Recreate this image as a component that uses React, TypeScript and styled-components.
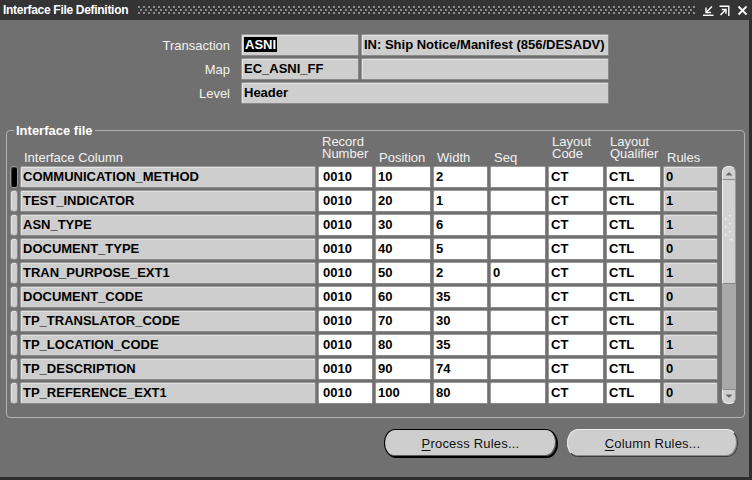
import React from 'react';
import styled, { createGlobalStyle } from 'styled-components';

const Global = createGlobalStyle`
  html, body { margin: 0; padding: 0; background: #707070; }
  body { font-family: "Liberation Sans", Arial, sans-serif; }
  * { box-sizing: border-box; }
`;

const Window = styled.div`
  width: 752px;
  height: 480px;
  display: flex;
  flex-direction: column;
  background: #707070;
  overflow: hidden;
`;

const TitleBar = styled.div`
  height: 20px;
  flex: none;
  background: #343434;
  display: flex;
  align-items: center;
  padding-left: 3px;
`;

const Title = styled.div`
  color: #ffffff;
  font-weight: bold;
  font-size: 12px;
  letter-spacing: -0.3px;
  white-space: nowrap;
  width: 135px;
`;

const Dots = styled.div`
  width: 557px;
  height: 10px;
  background-image:
    radial-gradient(circle at 1px 1px, #8e8e8e 0.7px, transparent 1px),
    radial-gradient(circle at 1px 1px, #8e8e8e 0.7px, transparent 1px);
  background-size: 5px 6px, 5px 6px;
  background-position: 0 1px, 2px 4px;
`;

const Controls = styled.div`
  display: flex;
  align-items: center;
  margin-left: 8px;
  gap: 5px;
`;

const Body = styled.div`
  flex: 1;
  display: flex;
  flex-direction: column;
  padding: 14px 0 0 6px;
  border-right: 3px solid #2e2e2e;
  border-bottom: 3px solid #2e2e2e;
`;

const Form = styled.div`
  display: flex;
  flex-direction: column;
  gap: 2px;
`;

const FormRow = styled.div`
  display: flex;
  align-items: center;
  gap: 2px;
`;

const Label = styled.div`
  width: 224px;
  margin-right: 9px;
  text-align: right;
  color: #f2f2f2;
  font-size: 13px;
`;

const Field = styled.div<{ $w: number; $white?: boolean; $pad?: number }>`
  width: ${p => p.$w}px;
  height: 22px;
  flex: none;
  background: ${p => (p.$white ? '#ffffff' : '#cecece')};
  border: 1px solid #8a8a8a;
  border-top-color: #9a9a9a;
  border-left-color: #9a9a9a;
  border-radius: 2px;
  box-shadow: inset 1px 1px 0 ${p => (p.$white ? '#ffffff' : '#e2e2e2')};
  padding: 0 ${p => p.$pad ?? 2}px;
  font-size: 13px;
  font-weight: bold;
  line-height: 20px;
  color: #000;
  white-space: nowrap;
  overflow: hidden;
`;

const Selected = styled.span`
  background: #000;
  color: #fff;
  padding: 0 1px;
`;

const Group = styled.div`
  width: 739px;
  margin-top: 26px;
  border: 1px solid #b2b2b2;
  border-radius: 4px;
  padding: 0 8px 13px 3px;
  display: flex;
  flex-direction: column;
`;

const GroupTitle = styled.div`
  align-self: flex-start;
  margin: -8px 0 -4px 4px;
  padding: 0 2px;
  height: 15px;
  line-height: 15px;
  background: #707070;
  color: #ffffff;
  font-weight: bold;
  font-size: 13px;
`;

const cols = '8px 296px 55px 56px 55px 56px 56px 55px 55px';

const HeaderGrid = styled.div`
  display: grid;
  grid-template-columns: ${cols};
  column-gap: 2px;
  height: 31px;
  margin-bottom: 1px;
  align-items: end;
`;

const HeaderCell = styled.div<{ $two?: boolean }>`
  padding-left: 4px;
  padding-bottom: ${p => (p.$two ? 5 : 0)}px;
  line-height: ${p => (p.$two ? 12 : 15)}px;
  font-size: 13px;
  color: #f2f2f2;
  white-space: pre-line;
`;

const TableArea = styled.div`
  display: flex;
  gap: 4px;
`;

const Rows = styled.div`
  display: flex;
  flex-direction: column;
  gap: 2px;
`;

const Row = styled.div`
  display: grid;
  grid-template-columns: ${cols};
  column-gap: 2px;
`;

const Indicator = styled.div<{ $current?: boolean }>`
  height: 22px;
  border-radius: 3px;
  background: ${p => (p.$current ? '#000000' : '#cecece')};
  border: 1px solid ${p => (p.$current ? '#9a9a9a' : '#8a8a8a')};
  box-shadow: inset 1px 1px 0 ${p => (p.$current ? '#3a3a3a' : '#e6e6e6')};
`;

const Cell = styled(Field)`
  width: auto;
`;

const Scrollbar = styled.div`
  width: 14px;
  height: 238px;
  display: flex;
  flex-direction: column;
`;

const ArrowBtn = styled.div<{ $down?: boolean }>`
  height: ${p => (p.$down ? 15 : 14)}px;
  background: #d0d0d0;
  border: 1px solid #ececec;
  border-right-color: #9a9a9a;
  border-radius: ${p => (p.$down ? '0 0 6px 6px' : '6px 6px 0 0')};
  border-${p => (p.$down ? 'top' : 'bottom')}: 1px solid #8a8a8a;
  display: flex;
  align-items: center;
  justify-content: center;
`;

const Thumb = styled.div`
  height: 104px;
  background: #d2d2d2;
  border-left: 1px solid #ececec;
  border-right: 1px solid #9a9a9a;
  border-bottom: 1px solid #8a8a8a;
  display: flex;
  justify-content: center;
  padding-top: 35px;
`;

const Track = styled.div`
  flex: 1;
  background: #a9a9a9;
`;

const ButtonRow = styled.div`
  display: flex;
  justify-content: flex-end;
  gap: 10px;
  margin-top: 11px;
  padding-right: 11px;
`;

const Button = styled.button<{ $w: number; $default?: boolean }>`
  width: ${p => p.$w}px;
  height: 28px;
  border-radius: 11px / 14px;
  background: #cecece;
  font-family: "Liberation Sans", Arial, sans-serif;
  font-size: 13px;
  letter-spacing: 0.2px;
  color: #111;
  padding: 0;
  border: 1px solid ${p => (p.$default ? '#000' : '#ececec')};
  border-right-color: ${p => (p.$default ? '#000' : '#3a3a3a')};
  border-bottom-color: ${p => (p.$default ? '#000' : '#3a3a3a')};
  box-shadow: ${p => (p.$default ? '1px 1px 0 #000, inset -1px -1px 0 #5a5a5a' : 'inset -1px -1px 0 #8a8a8a')};
  u { text-decoration: underline; text-underline-offset: 2px; }
`;

const rows = [
  ['COMMUNICATION_METHOD', '0010', '10', '2', '', 'CT', 'CTL', '0'],
  ['TEST_INDICATOR', '0010', '20', '1', '', 'CT', 'CTL', '1'],
  ['ASN_TYPE', '0010', '30', '6', '', 'CT', 'CTL', '1'],
  ['DOCUMENT_TYPE', '0010', '40', '5', '', 'CT', 'CTL', '0'],
  ['TRAN_PURPOSE_EXT1', '0010', '50', '2', '0', 'CT', 'CTL', '1'],
  ['DOCUMENT_CODE', '0010', '60', '35', '', 'CT', 'CTL', '0'],
  ['TP_TRANSLATOR_CODE', '0010', '70', '30', '', 'CT', 'CTL', '1'],
  ['TP_LOCATION_CODE', '0010', '80', '35', '', 'CT', 'CTL', '1'],
  ['TP_DESCRIPTION', '0010', '90', '74', '', 'CT', 'CTL', '0'],
  ['TP_REFERENCE_EXT1', '0010', '100', '80', '', 'CT', 'CTL', '0'],
];

const headers: [string, boolean][] = [
  ['', false],
  ['Interface Column', false],
  ['Record\nNumber', true],
  ['Position', false],
  ['Width', false],
  ['Seq', false],
  ['Layout\nCode', true],
  ['Layout\nQualifier', true],
  ['Rules', false],
];

export default function App() {
  return (
    <>
      <Global />
      <Window>
        <TitleBar>
          <Title>Interface File Definition</Title>
          <Dots />
          <Controls>
            <svg width="11" height="12" viewBox="0 0 11 12">
              <g stroke="#fff" strokeWidth="1.4" fill="none">
                <path d="M0 11.3H10.5" />
                <path d="M3 3.5V8.5H8" />
                <path d="M3 8.5L9 2.5" />
              </g>
            </svg>
            <svg width="11" height="12" viewBox="0 0 11 12">
              <g stroke="#fff" strokeWidth="1.4" fill="none">
                <path d="M0.5 2.2H9.8V12" />
                <path d="M1.5 11L7 5.5" />
                <path d="M2.8 5.5H7V9.7" />
              </g>
            </svg>
            <svg width="12" height="12" viewBox="0 0 12 12" style={{ marginLeft: 2 }}>
              <g stroke="#fff" strokeWidth="1.8" fill="none">
                <path d="M1.5 2.5L9.5 10.5" />
                <path d="M9.5 2.5L1.5 10.5" />
              </g>
            </svg>
          </Controls>
        </TitleBar>
        <Body>
          <Form>
            <FormRow>
              <Label>Transaction</Label>
              <Field $w={118}><Selected>ASNI</Selected></Field>
              <Field $w={248}>IN: Ship Notice/Manifest (856/DESADV)</Field>
            </FormRow>
            <FormRow>
              <Label>Map</Label>
              <Field $w={118}>EC_ASNI_FF</Field>
              <Field $w={248} />
            </FormRow>
            <FormRow>
              <Label>Level</Label>
              <Field $w={368}>Header</Field>
            </FormRow>
          </Form>
          <Group>
            <GroupTitle>Interface file</GroupTitle>
            <HeaderGrid>
              {headers.map(([t, two], i) => (
                <HeaderCell key={i} $two={two}>{t}</HeaderCell>
              ))}
            </HeaderGrid>
            <TableArea>
              <Rows>
                {rows.map((r, i) => (
                  <Row key={i}>
                    <Indicator $current={i === 0} />
                    <Cell $w={0}>{r[0]}</Cell>
                    <Cell $w={0} $white $pad={4}>{r[1]}</Cell>
                    <Cell $w={0} $white>{r[2]}</Cell>
                    <Cell $w={0} $white>{r[3]}</Cell>
                    <Cell $w={0} $white>{r[4]}</Cell>
                    <Cell $w={0} $white>{r[5]}</Cell>
                    <Cell $w={0} $white>{r[6]}</Cell>
                    <Cell $w={0}>{r[7]}</Cell>
                  </Row>
                ))}
              </Rows>
              <Scrollbar>
                <ArrowBtn>
                  <svg width="8" height="5" viewBox="0 0 8 5"><path d="M0.5 4.5L4 1L7.5 4.5Z" fill="#6a6a6a" /></svg>
                </ArrowBtn>
                <Thumb>
                  <svg width="8" height="26" viewBox="0 0 8 26">
                    <g fill="#f4f4f4">
                      <rect x="0" y="3" width="1.5" height="1.5" />
                      <rect x="4" y="0" width="1.5" height="1.5" />
                      <rect x="0" y="11" width="1.5" height="1.5" />
                      <rect x="4" y="8" width="1.5" height="1.5" />
                      <rect x="0" y="19" width="1.5" height="1.5" />
                      <rect x="4" y="16" width="1.5" height="1.5" />
                      <rect x="5.5" y="24" width="1.5" height="1.5" />
                    </g>
                  </svg>
                </Thumb>
                <Track />
                <ArrowBtn $down>
                  <svg width="8" height="5" viewBox="0 0 8 5"><path d="M0.5 0.5L4 4L7.5 0.5Z" fill="#6a6a6a" /></svg>
                </ArrowBtn>
              </Scrollbar>
            </TableArea>
          </Group>
          <ButtonRow>
            <Button $w={173} $default><u>P</u>rocess Rules...</Button>
            <Button $w={171}><u>C</u>olumn Rules...</Button>
          </ButtonRow>
        </Body>
      </Window>
    </>
  );
}
